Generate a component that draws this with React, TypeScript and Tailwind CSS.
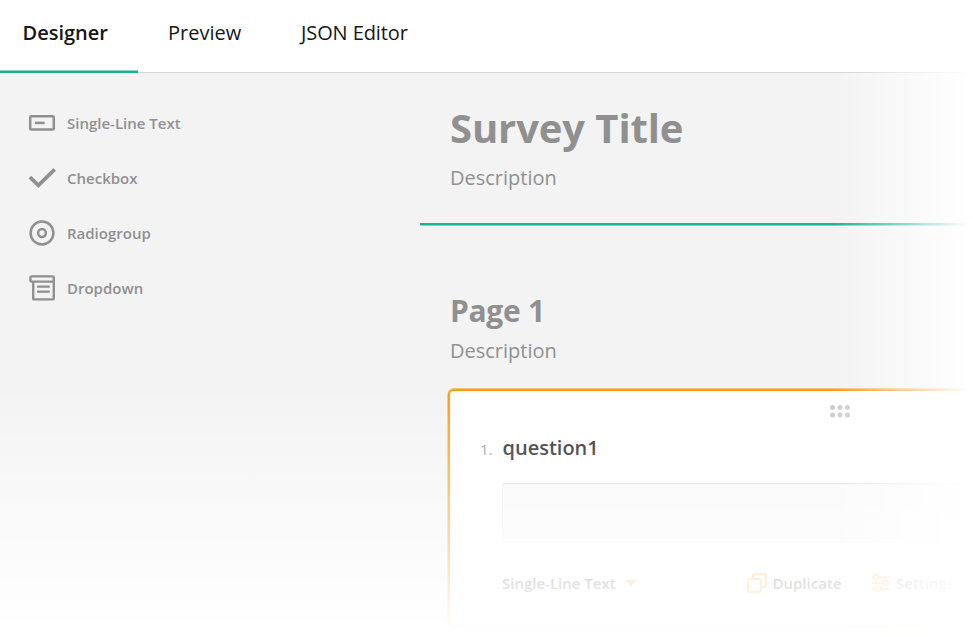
import type { ReactNode } from 'react';

function TextIcon() {
  return (
    <svg width="28" height="28" viewBox="0 0 28 28" fill="none" stroke="currentColor" strokeWidth="2.500">
      <rect x="2.2" y="7.2" width="23.6" height="13.4" rx="1.2" />
      <path d="M7 13.9h9.6" />
    </svg>
  );
}

function CheckIcon() {
  return (
    <svg className="overflow-visible" width="28" height="28" viewBox="0 0 28 28" fill="none" stroke="currentColor" strokeWidth="3.700">
      <path d="M1.900 13.200l8.500 8.200L26.700 5.400" />
    </svg>
  );
}

function RadioIcon() {
  return (
    <svg width="28" height="28" viewBox="0 0 28 28" fill="none" stroke="currentColor" strokeWidth="2.500">
      <circle cx="14" cy="14" r="11.4" />
      <circle cx="14" cy="14" r="3.900" />
    </svg>
  );
}

function DropdownIcon() {
  return (
    <svg width="28" height="28" viewBox="0 0 28 28" fill="none" stroke="currentColor" strokeWidth="2.4">
      <rect x="2.4" y="2.4" width="23.4" height="5.2" rx="1.2" />
      <path d="M5.2 7.6v16.800c0 .6.4 1 1 1h18.600c.6 0 1-.4 1-1V7" />
      <path d="M9 12.700h12.8M9 17.700h12.8" strokeWidth="2.2" />
    </svg>
  );
}

function DuplicateIcon() {
  return (
    <svg width="20" height="20" viewBox="0 0 20 20" fill="none" stroke="currentColor" strokeWidth="2">
      <rect x="1" y="6" width="13" height="13" rx="2" />
      <path d="M6 6V3a2 2 0 0 1 2-2h9a2 2 0 0 1 2 2v9a2 2 0 0 1-2 2h-3" />
    </svg>
  );
}

function SettingsIcon() {
  return (
    <svg width="18" height="20" viewBox="0 0 18 20" fill="none" stroke="currentColor" strokeWidth="2">
      <path d="M0 4h1.5M6.500 4H18M0 10h11.500M16.500 10H18M0 16h4M9 16h9" />
      <circle cx="4" cy="4" r="2.600" />
      <circle cx="14" cy="10" r="2.600" />
      <circle cx="6.500" cy="16" r="2.600" />
    </svg>
  );
}

const tools: { title: string; icon: ReactNode }[] = [
  { title: 'Single-Line Text', icon: <TextIcon /> },
  { title: 'Checkbox', icon: <CheckIcon /> },
  { title: 'Radiogroup', icon: <RadioIcon /> },
  { title: 'Dropdown', icon: <DropdownIcon /> },
];

function Tabs() {
  return (
    <header className="flex h-[73px] shrink-0 items-start text-[20px] leading-[66px] text-[#161616] shadow-[inset_0_-1px_0_#d4d4d4]">
      <button className="relative h-[73px] w-[138px] pb-[7px] pl-[22.5px] text-left font-semibold">
        Designer
        <span className="absolute inset-x-0 bottom-0 h-[3px] border-t border-[#8cd9c7] bg-[#19b394]" />
      </button>
      <button className="w-[163px] pl-[30px] text-left">Preview</button>
      <button className="text-left tracking-[-0.1px]">JSON Editor</button>
    </header>
  );
}

function Toolbox() {
  return (
    <aside className="w-[420px] shrink-0 pt-[22px] pl-7 text-[15px] font-semibold text-[#909090]">
      {tools.map((tool) => (
        <div key={tool.title} className="flex h-[55px] items-center gap-[11px]">
          {tool.icon}
          <span className="pt-[2px]">{tool.title}</span>
        </div>
      ))}
    </aside>
  );
}

function QuestionCard() {
  return (
    <section className="mt-6 ml-7 h-[238px] w-[784px] rounded-[6px] border-2 border-[#ff9814] bg-white shadow-[0_0_0_1px_#ff981480]">
      {/* Drag handle */}
      <div className="flex h-10 justify-center pt-[14px]">
        <svg width="20" height="13" viewBox="0 0 20 13" fill="#c8c8c8">
          <circle cx="2.500" cy="2.500" r="2.500" />
          <circle cx="10" cy="2.500" r="2.500" />
          <circle cx="17.500" cy="2.500" r="2.500" />
          <circle cx="2.500" cy="10" r="2.500" />
          <circle cx="10" cy="10" r="2.500" />
          <circle cx="17.500" cy="10" r="2.500" />
        </svg>
      </div>

      <div className="flex h-[34px] items-baseline pl-[30px]">
        <span className="w-[22.5px] text-[15px] text-[#909090]">1.</span>
        <span className="text-[20px] leading-[34px] font-semibold text-[#161616]">question1</span>
      </div>

      <div className="mt-[18px] ml-[52px] h-[60px] w-[674px] rounded-[3px] bg-[#f8f8f8] shadow-[inset_0_1px_2px_rgba(0,0,0,0.15)]" />

      {/* Question actions */}
      <div className="mt-[26px] ml-[52px] flex h-7 items-center text-[15px] font-semibold text-[#606060]">
        <span className="w-[123px]">Single-Line Text</span>
        <svg width="12" height="6" viewBox="0 0 12 6" fill="#ffb04a">
          <path d="M0 0h12L6 6z" />
        </svg>
        <div className="ml-[110px] flex w-[125px] items-center gap-[5.5px]">
          <span className="text-[#ffb04a]"><DuplicateIcon /></span>
          <span>Duplicate</span>
        </div>
        <div className="flex items-center gap-[6px]">
          <span className="text-[#ffb04a]"><SettingsIcon /></span>
          <span>Settings</span>
        </div>
      </div>
    </section>
  );
}

export default function App() {
  return (
    <div className="relative flex h-[637px] w-[973px] flex-col overflow-hidden bg-white font-['Open_Sans',sans-serif]">
      <Tabs />
      <div className="flex min-h-0 flex-1 bg-[#f3f3f3]">
        <Toolbox />
        <main className="w-[553px] shrink-0">
          <div className="h-[152px] border-b-2 border-[#19b394] pt-[27px] pl-[30px] text-[#909090] shadow-[0_1px_0_#19b39480]">
            <h1 className="text-[40px] leading-[56px] font-bold tracking-[-0.1px]">Survey Title</h1>
            <p className="mt-2 text-[20px] leading-7">Description</p>
          </div>
          <div className="pt-[66px] pl-[30px] text-[#909090]">
            <h2 className="text-[30px] leading-[40px] font-bold tracking-[-0.3px]">Page 1</h2>
            <p className="mt-[6px] text-[20px] leading-7">Description</p>
          </div>
          <QuestionCard />
        </main>
      </div>

      {/* Edge fades */}
      <div className="pointer-events-none absolute inset-y-0 right-0 w-[140px] bg-linear-to-r from-white/0 to-white to-[137px]" />
      <div className="pointer-events-none absolute inset-x-0 bottom-0 h-[252px] bg-linear-to-b from-white/0 to-white to-[246px]" />
    </div>
  );
}
